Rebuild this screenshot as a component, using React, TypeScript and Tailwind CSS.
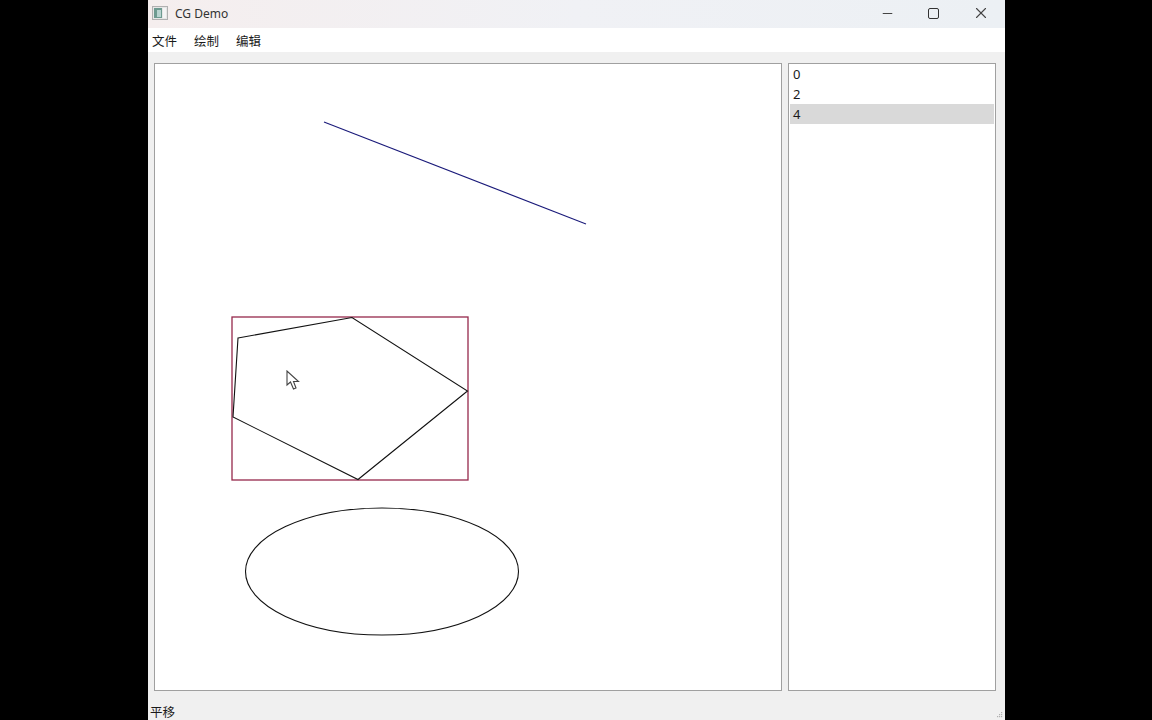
import { Minus, X } from "lucide-react";

const listItems = ["0", "2", "4"];
const menuItems = ["文件", "绘制", "编辑"];
const cjk = { fontFamily: '"Noto Sans", "Noto Sans CJK SC", sans-serif' };

function AppIcon() {
  return (
    <svg width="16" height="16" viewBox="0 0 16 16">
      <rect x="0.5" y="1.5" width="15" height="13" fill="#e6e6e6" stroke="#b0b0b0" />
      <rect x="2" y="3" width="8" height="10" fill="#6d9a90" />
      <rect x="5" y="5" width="4" height="7" fill="#b7d3cf" />
      <rect x="11" y="3" width="3" height="10" fill="#f4f4f4" />
    </svg>
  );
}

function Drawing() {
  return (
    <svg width="626" height="626" viewBox="155 64 626 626" className="block">
      <line x1="324" y1="122" x2="586" y2="224" stroke="#1a1a7a" strokeWidth="1.1" />
      <rect x="232" y="317" width="236" height="163" fill="none" stroke="#96284c" strokeWidth="1.3" />
      <polygon
        points="238,338 352,317.5 467.5,391 358,479.5 233,417"
        fill="none"
        stroke="#111"
        strokeWidth="1.1"
      />
      <ellipse cx="382" cy="571.5" rx="136.5" ry="63.5" fill="none" stroke="#111" strokeWidth="1.1" />
    </svg>
  );
}

function Cursor() {
  return (
    <svg width="14" height="21" viewBox="0 0 14 21" className="absolute left-[131px] top-[306px]">
      <path d="M1 1 L1 15 L4.5 12 L7.5 19 L10 18 L7.5 11.5 L12.5 11.5 Z" fill="#fff" stroke="#444" strokeWidth="1.1" />
    </svg>
  );
}

export default function App() {
  return (
    <div className="w-[1152px] h-[720px] overflow-hidden bg-black pl-[148px]">
      <div className="w-[857px] h-[720px] flex flex-col bg-[#f0f0f0] text-[#1a1a1a]" style={cjk}>
        <div className="h-[28px] flex items-center bg-gradient-to-r from-[#f5eeee] via-[#f0f1f5] to-[#ecf0f4]">
          <div className="ml-[4px] mt-[-3px]">
            <AppIcon />
          </div>
          <span className="ml-[7px] mt-[-1px] text-[12px] text-[#333]">CG Demo</span>
          <div className="ml-auto flex items-center mt-[-2px]">
            <div className="w-[47px] flex justify-center pl-[1px]">
              <Minus size={15} strokeWidth={1.7} color="#444" />
            </div>
            <div className="w-[47px] flex justify-center">
              <div className="w-[11px] h-[11px] rounded-[2px] border-[1.5px] border-[#333]" />
            </div>
            <div className="w-[48px] flex justify-center">
              <X size={18} strokeWidth={1.5} color="#444" />
            </div>
          </div>
        </div>
        <div className="h-[24px] flex items-center gap-[17px] bg-white pl-[4px] pt-[5px] text-[12.5px]">
          {menuItems.map((m) => (
            <span key={m}>{m}</span>
          ))}
        </div>
        <div className="flex-1 flex gap-[6px] pl-[6px] pt-[11px]">
          <div className="relative w-[628px] h-[628px] bg-white border border-[#a0a0a0]">
            <Drawing />
            <Cursor />
          </div>
          <div className="w-[208px] h-[628px] bg-white border border-[#a0a0a0] px-px">
            {listItems.map((item) => (
              <div
                key={item}
                className={`h-[20px] pl-[3px] pt-[1px] flex items-center text-[13px] ${item === "4" ? "bg-[#d9d9d9]" : ""}`}
              >
                {item}
              </div>
            ))}
          </div>
        </div>
        <div className="h-[29px] relative flex items-end pl-[2px] text-[12.5px] leading-[18px]">
          <span className="mb-[-2px]">平移</span>
          <svg width="8" height="8" viewBox="0 0 8 8" className="absolute right-[1px] bottom-[1px]">
            <rect x="5" y="1" width="1.2" height="1.2" fill="#b0b0b0" />
            <rect x="3" y="3" width="1.2" height="1.2" fill="#b0b0b0" />
            <rect x="5" y="3" width="1.2" height="1.2" fill="#b0b0b0" />
            <rect x="1" y="5" width="1.2" height="1.2" fill="#b0b0b0" />
            <rect x="3" y="5" width="1.2" height="1.2" fill="#b0b0b0" />
            <rect x="5" y="5" width="1.2" height="1.2" fill="#b0b0b0" />
          </svg>
        </div>
      </div>
    </div>
  );
}
